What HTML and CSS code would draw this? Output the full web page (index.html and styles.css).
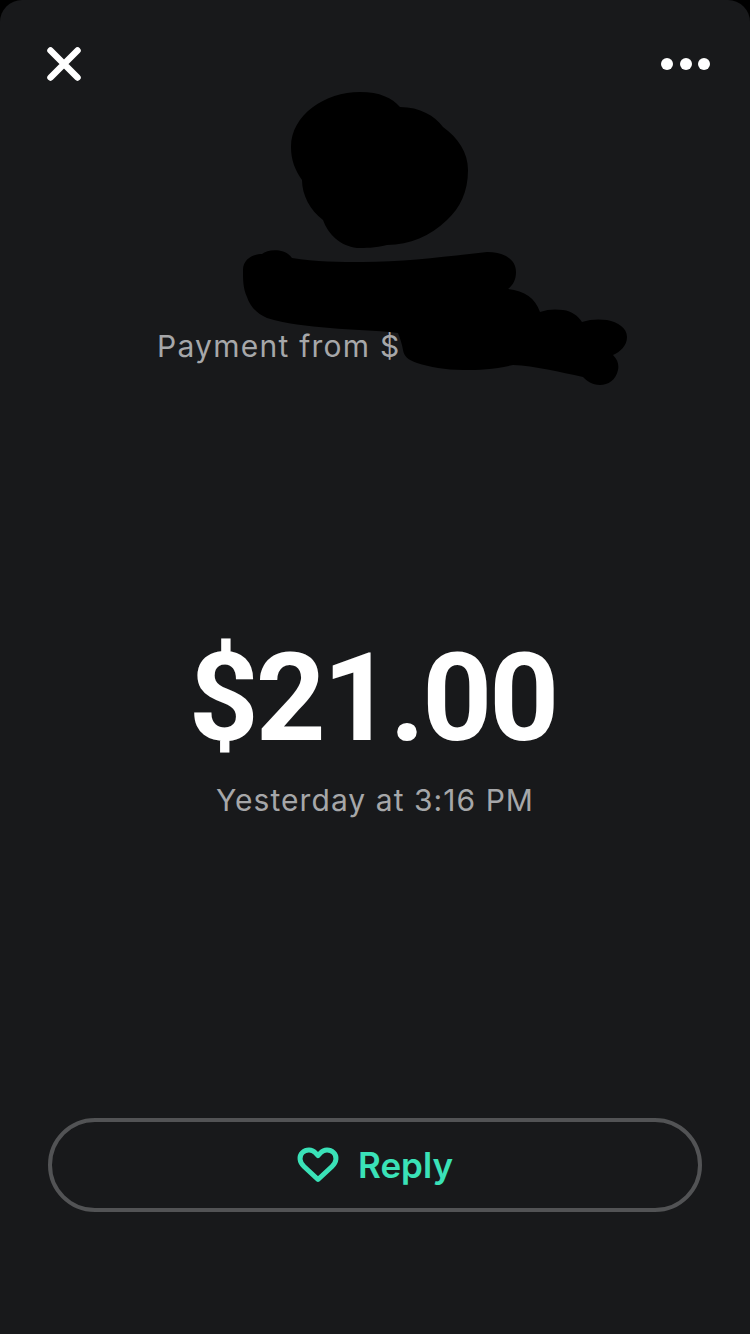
FILE: index.html
```html
<!DOCTYPE html>
<html lang="en">
<head>
    <meta charset="UTF-8">
    <meta name="viewport" content="width=device-width, initial-scale=1.0">
    <title>Payment</title>
    <link rel="stylesheet" href="styles.css">
</head>
<body>
    <div class="screen">
        <div class="top-bar">
            <svg class="close-icon" width="36" height="36" viewBox="0 0 36 36">
                <path d="M4.5 4.5L31.5 31.5M31.5 4.5L4.5 31.5" fill="none" stroke="#fff" stroke-width="6.5" stroke-linecap="round"/>
            </svg>
            <div class="more-icon">
                <span class="dot"></span>
                <span class="dot"></span>
                <span class="dot"></span>
            </div>
        </div>

        <div class="sender">
            <span>Payment from $</span><span class="handle"></span>
        </div>

        <div class="payment">
            <div class="amount">$21.00</div>
            <div class="date">Yesterday at 3:16 PM</div>
        </div>

        <button class="reply-btn">
            <svg class="heart-icon" width="42" height="36" viewBox="0 0 42 36">
                <path d="M21 32.5L7 19.5C2.2 15 1.8 9 5.5 5.5C9.3 1.9 15 2.2 18.2 5.6L21 8.6L23.8 5.6C27 2.2 32.7 1.9 36.5 5.5C40.2 9 39.8 15 35 19.5Z" fill="none" stroke="#3ae2b8" stroke-width="5" stroke-linejoin="round"/>
            </svg>
            <span>Reply</span>
        </button>

        <!-- marker scribble drawn over the name -->
        <svg class="scribble" width="750" height="400" viewBox="0 0 750 400">
            <path d="M291 147C291 115 325 92 360 92C380 92 392 98 400 107C420 107 435 116 443 127C458 138 468 152 468 170C468 192 460 208 447 220C430 236 410 245 387 245C375 248 365 248 357 248C340 246 328 234 323 220C310 210 302 195 302 180C295 170 291 160 291 147Z" fill="#000"/>
            <path d="M243 270C243 258 255 254 262 254C268 249 285 248 292 258C315 262 340 262 363 262C405 262 450 256 487 252C505 252 516 260 516 272C516 280 513 285 508 289C525 291 535 298 540 312C548 309 556 309 563 310C572 311 578 316 582 322C590 319 600 319 607 320C618 322 627 328 627 337C627 346 620 352 613 355C618 360 619 365 618 370C616 380 608 385 600 385C592 385 587 381 583 377C560 372 535 366 513 365C495 369 480 370 463 370C445 370 430 367 417 363C408 360 404 356 403 350C402 344 400 338 398 333C375 330 352 330 330 328C308 326 285 324 267 318C256 313 250 306 247 297C243 288 243 280 243 270Z" fill="#000"/>
        </svg>
    </div>
</body>
</html>
```

FILE: styles.css
```css
body {
    font-family: 'Inter', sans-serif;
    background-color: #000;
    margin: 0;
    padding: 0;
}
.screen {
    position: relative;
    box-sizing: border-box;
    height: 1334px;
    background-color: #18191b;
    border-radius: 22px 22px 0 0;
    overflow: hidden;
    padding: 46px 40px 0 46px;
}
.top-bar {
    display: flex;
    justify-content: space-between;
    align-items: center;
}
.close-icon {
    display: block;
}
.more-icon {
    display: flex;
    gap: 6.5px;
}
.dot {
    width: 12px;
    height: 12px;
    border-radius: 50%;
    background-color: #fff;
}
.sender {
    margin: 244px 0 0 111px;
    color: #a6a7a9;
    font-size: 30px;
    line-height: 40px;
    letter-spacing: 1.25px;
    white-space: nowrap;
}
.payment {
    margin: 263px 6px 0 0;
    text-align: center;
}
.amount {
    margin-right: 5px;
    color: #fff;
    font-family: 'Roboto', sans-serif;
    font-size: 122px;
    font-weight: 700;
    line-height: 140px;
    letter-spacing: -3px;
}
.date {
    margin-top: 11px;
    color: #a6a7a9;
    font-size: 30px;
    line-height: 40px;
    letter-spacing: 1.05px;
}
.reply-btn {
    display: flex;
    justify-content: center;
    align-items: center;
    gap: 19px;
    box-sizing: border-box;
    width: 654px;
    height: 94px;
    margin: 298px 0 0 2px;
    background: none;
    border: 4px solid #525355;
    border-radius: 47px;
    color: #3ae2b8;
    font-family: inherit;
    font-size: 35px;
    font-weight: 600;
}
.heart-icon {
    display: block;
}
.scribble {
    position: absolute;
    top: 0;
    left: 0;
}
```
